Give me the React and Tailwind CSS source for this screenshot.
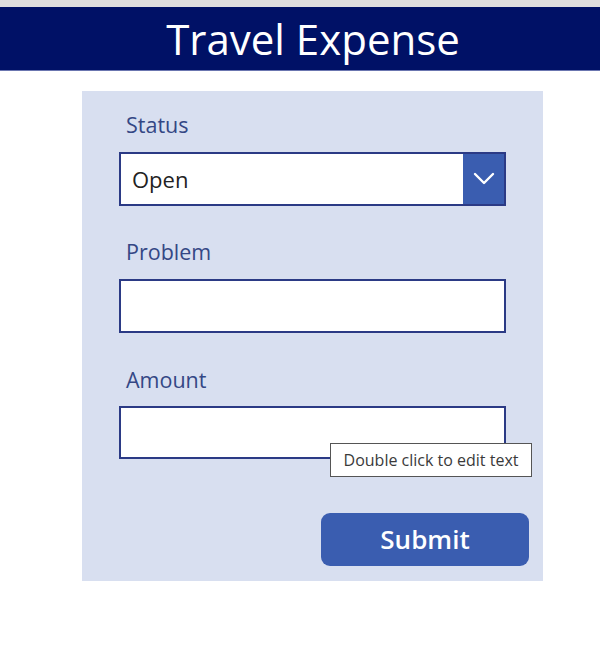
import React from 'react'

function Label({ children }) {
  return <div className="h-7 pl-[7px] text-[21.5px] leading-7 text-[#344785]">{children}</div>
}

export default function App() {
  return (
    <div className="min-h-[669px] bg-white" style={{ fontFamily: '"Open Sans", sans-serif' }}>
      <div className="h-[7px] bg-[#dedede]" />
      <div className="flex h-[64px] items-center justify-center border-b border-[#6b76b0] bg-[#001166]">
        <h1 className="pl-[26px] text-[42px] leading-none text-white">Travel Expense</h1>
      </div>

      <div className="ml-[82px] mt-[20px] w-[461px] bg-[#d8dff0] pb-[15px] pl-[37px] pr-[14px] pt-[20px]">
        <Label>Status</Label>
        <div className="mt-[13px] flex h-[54px] w-[387px] border-2 border-[#2b3a85] bg-white">
          <div className="flex flex-1 items-center pl-[11px] text-[22px] text-[#222]">Open</div>
          <div className="flex w-[41px] items-center justify-center bg-[#3a5db0]">
            <svg width="22" height="14" viewBox="0 0 22 14" fill="none">
              <path d="M2 2l9 9 9-9" stroke="white" strokeWidth="2.4" strokeLinecap="round" strokeLinejoin="round" />
            </svg>
          </div>
        </div>

        <div className="mt-[32px]">
          <Label>Problem</Label>
        </div>
        <div className="mt-[13px] h-[54px] w-[387px] border-2 border-[#2b3a85] bg-white" />

        <div className="mt-[33px]">
          <Label>Amount</Label>
        </div>
        <div className="relative mt-[12px] h-[53px] w-[387px] border-2 border-[#2b3a85] bg-white">
          <div className="absolute left-[209px] top-[35px] z-10 flex h-[34px] w-[202px] items-center justify-center whitespace-nowrap border border-[#555] bg-white text-[16px] text-[#3a3a3a]">
            Double click to edit text
          </div>
        </div>

        <div className="mt-[54px] flex justify-end">
          <button className="flex h-[53px] w-[208px] items-center justify-center rounded-[9px] bg-[#3a5db0] text-[26px] font-semibold text-white">
            Submit
          </button>
        </div>
      </div>
    </div>
  )
}
